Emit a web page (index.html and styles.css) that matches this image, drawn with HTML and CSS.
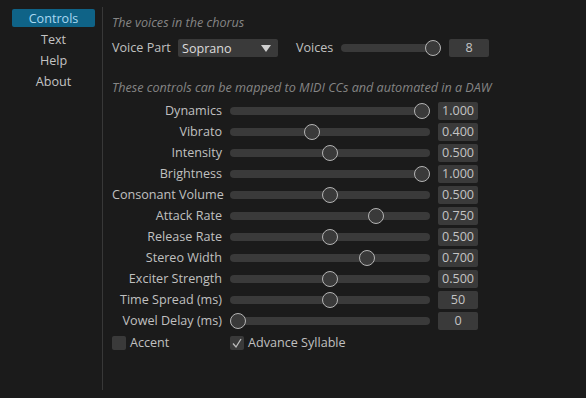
FILE: index.html
```html
<!DOCTYPE html>
<html>
<head>
<meta charset="utf-8">
<link rel="stylesheet" href="styles.css">
</head>
<body>
<div class="app">
  <nav class="sidebar">
    <div class="nav-item active">Controls</div>
    <div class="nav-item">Text</div>
    <div class="nav-item">Help</div>
    <div class="nav-item">About</div>
  </nav>
  <main class="main">
    <div class="hint">The voices in the chorus</div>
    <div class="voice-row">
      <span class="lbl voicepart-lbl">Voice Part</span>
      <div class="select"><span>Soprano</span><span class="tri"></span></div>
      <span class="lbl voices-lbl">Voices</span>
      <div class="track voices-track"><div class="knob" style="left:84px"></div></div>
      <div class="value">8</div>
    </div>
    <div class="hint hint2">These controls can be mapped to MIDI CCs and automated in a DAW</div>
    <div class="grid">
      <div class="name">Dynamics</div><div class="track"><div class="knob" style="left:184px"></div></div><div class="value">1.000</div>
      <div class="name">Vibrato</div><div class="track"><div class="knob" style="left:73.6px"></div></div><div class="value">0.400</div>
      <div class="name">Intensity</div><div class="track"><div class="knob" style="left:92px"></div></div><div class="value">0.500</div>
      <div class="name">Brightness</div><div class="track"><div class="knob" style="left:184px"></div></div><div class="value">1.000</div>
      <div class="name">Consonant Volume</div><div class="track"><div class="knob" style="left:92px"></div></div><div class="value">0.500</div>
      <div class="name">Attack Rate</div><div class="track"><div class="knob" style="left:138px"></div></div><div class="value">0.750</div>
      <div class="name">Release Rate</div><div class="track"><div class="knob" style="left:92px"></div></div><div class="value">0.500</div>
      <div class="name">Stereo Width</div><div class="track"><div class="knob" style="left:128.8px"></div></div><div class="value">0.700</div>
      <div class="name">Exciter Strength</div><div class="track"><div class="knob" style="left:92px"></div></div><div class="value">0.500</div>
      <div class="name">Time Spread (ms)</div><div class="track"><div class="knob" style="left:92px"></div></div><div class="value">50</div>
      <div class="name">Vowel Delay (ms)</div><div class="track"><div class="knob" style="left:0px"></div></div><div class="value">0</div>
    </div>
    <div class="checks">
      <label class="check first"><span class="box"></span>Accent</label>
      <label class="check"><span class="box"><svg width="14" height="14" viewBox="0 0 14 14"><polyline points="3,7.5 6,11 11,3" fill="none" stroke="#bdbdbd" stroke-width="1.3"/></svg></span>Advance Syllable</label>
    </div>
  </main>
</div>
</body>
</html>
```

FILE: styles.css
```css
html, body {
  margin: 0;
  padding: 0;
  background: #1b1b1b;
}
body {
  font-family: "Open Sans", "Noto Sans", sans-serif;
  font-size: 12.6px;
  color: #c0c0c0;
  width: 586px;
  height: 398px;
  overflow: hidden;
  white-space: nowrap;
}
.app {
  display: flex;
  padding-top: 7px;
  height: 383px;
}
.sidebar {
  width: 103px;
  box-sizing: border-box;
  border-right: 1px solid #383838;
  padding: 2px 7px 0 12px;
  display: flex;
  flex-direction: column;
  gap: 3px;
}
.nav-item {
  height: 18px;
  box-sizing: border-box;
  padding-top: 1px;
  line-height: 18px;
  text-align: center;
  color: #c4c4c4;
  border-radius: 2px;
}
.nav-item.active {
  background: #0f6387;
  color: #aad9f2;
}
.main {
  flex: 1;
  padding: 7px 0 0 9px;
}
.hint {
  font-style: italic;
  color: #858585;
  height: 18px;
  line-height: 18px;
}
.voice-row {
  display: flex;
  align-items: center;
  height: 18px;
  margin-top: 7px;
}
.lbl {
  line-height: 18px;
}
.voicepart-lbl {
  width: 66px;
}
.select {
  width: 100px;
  height: 18px;
  box-sizing: border-box;
  background: #3a3a3a;
  border-radius: 2px;
  display: flex;
  align-items: center;
  justify-content: space-between;
  padding: 0 7px 0 4px;
  color: #dcdcdc;
}
.tri {
  width: 0;
  height: 0;
  border-left: 5px solid transparent;
  border-right: 5px solid transparent;
  border-top: 7px solid #d0d0d0;
}
.voices-lbl {
  margin-left: 18px;
  width: 45px;
}
.voices-track {
  width: 100px;
}
.voice-row .value {
  margin-left: 8px;
}
.hint2 {
  margin-top: 22px;
}
.grid {
  margin-top: 3px;
  display: grid;
  grid-template-columns: 110px 200px 40px;
  grid-auto-rows: 21px;
  column-gap: 8px;
  align-items: center;
}
.name {
  text-align: right;
  line-height: 18px;
}
.track {
  position: relative;
  height: 8px;
  border-radius: 4px;
  background: #3a3a3a;
}
.knob {
  position: absolute;
  top: -4px;
  width: 16px;
  height: 16px;
  box-sizing: border-box;
  border-radius: 50%;
  border: 1.5px solid #b4b4b4;
  background: #3a3a3a;
}
.value {
  width: 40px;
  height: 18px;
  line-height: 18px;
  background: #3a3a3a;
  border-radius: 2px;
  text-align: center;
  color: #c4c4c4;
}
.checks {
  display: flex;
  margin-top: 3px;
  height: 18px;
  align-items: center;
}
.check {
  display: flex;
  align-items: center;
  gap: 4px;
  line-height: 18px;
}
.check.first {
  width: 118px;
}
.box {
  width: 14px;
  height: 14px;
  background: #3a3a3a;
  border-radius: 2px;
  display: block;
}
.box svg {
  display: block;
}
```
